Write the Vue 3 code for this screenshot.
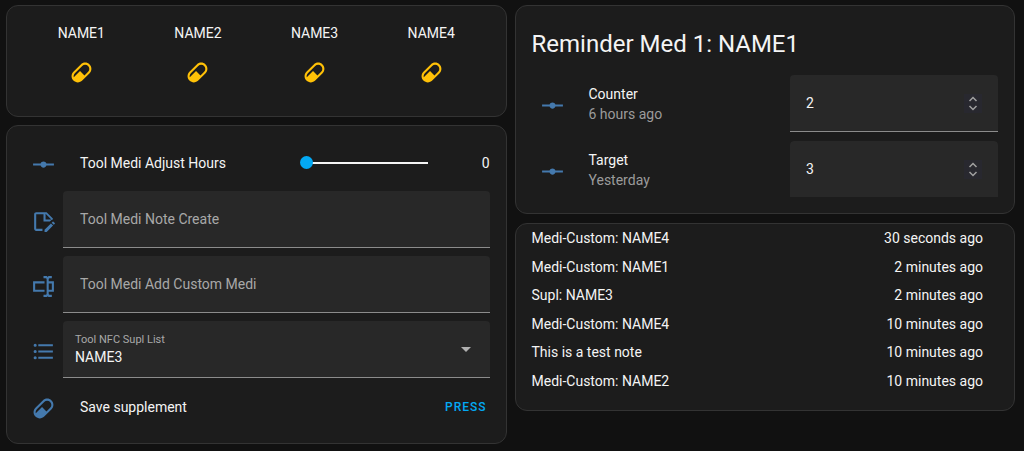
<script setup>
import { ref } from 'vue'

const icons = {
  pill: 'M4.22,11.29L11.29,4.22C13.64,1.88 17.43,1.88 19.78,4.22C22.12,6.56 22.12,10.36 19.78,12.71L12.71,19.78C10.36,22.12 6.56,22.12 4.22,19.78C1.88,17.43 1.88,13.64 4.22,11.29M5.64,12.71C4.59,13.75 4.24,15.24 4.6,16.57L10.59,10.59L14.83,14.83L18.36,11.29C19.93,9.73 19.93,7.2 18.36,5.64C16.8,4.07 14.27,4.07 12.71,5.64L5.64,12.71Z',
  vertex: 'M2,11H9.17C9.58,9.83 10.69,9 12,9C13.31,9 14.42,9.83 14.83,11H22V13H14.83C14.42,14.17 13.31,15 12,15C10.69,15 9.58,14.17 9.17,13H2V11Z',
  note: 'M18.13 12L19.39 10.74C19.83 10.3 20.39 10.06 21 10V9L15 3H5C3.89 3 3 3.89 3 5V19C3 20.1 3.89 21 5 21H11V19.13L11.13 19H5V5H12V12H18.13M14 4.5L19.5 10H14V4.5M19.13 13.83L21.17 15.87L15.04 22H13V19.96L19.13 13.83M22.85 14.19L21.87 15.17L19.83 13.13L20.81 12.15C21 11.95 21.33 11.95 21.53 12.15L22.85 13.47C23.05 13.67 23.05 14 22.85 14.19Z',
  textbox: 'M17,7H22V17H17V19A1,1 0 0,0 18,20H20V22H17.5C16.95,22 16,21.55 16,21C16,21.55 15.05,22 14.5,22H12V20H14A1,1 0 0,0 15,19V5A1,1 0 0,0 14,4H12V2H14.5C15.05,2 16,2.45 16,3C16,2.45 16.95,2 17.5,2H20V4H18A1,1 0 0,0 17,5V7M2,7H13V9H4V15H13V17H2V7M20,15V9H17V15H20Z',
  list: 'M7,5H21V7H7V5M7,13V11H21V13H7M4,4.5A1.5,1.5 0 0,1 5.5,6A1.5,1.5 0 0,1 4,7.5A1.5,1.5 0 0,1 2.5,6A1.5,1.5 0 0,1 4,4.5M4,10.5A1.5,1.5 0 0,1 5.5,12A1.5,1.5 0 0,1 4,13.5A1.5,1.5 0 0,1 2.5,12A1.5,1.5 0 0,1 4,10.5M7,19V17H21V19H7M4,16.5A1.5,1.5 0 0,1 5.5,18A1.5,1.5 0 0,1 4,19.5A1.5,1.5 0 0,1 2.5,18A1.5,1.5 0 0,1 4,16.5Z',
}

const names = ['NAME1', 'NAME2', 'NAME3', 'NAME4']
const hours = ref(0)
const supplement = ref('NAME3')
const textFields = [
  { id: 'note', label: 'Tool Medi Note Create', icon: icons.note },
  { id: 'custom', label: 'Tool Medi Add Custom Medi', icon: icons.textbox },
]
const counters = ref([
  { id: 'counter', label: 'Counter', changed: '6 hours ago', value: 2 },
  { id: 'target', label: 'Target', changed: 'Yesterday', value: 3 },
])
const log = [
  ['Medi-Custom: NAME4', '30 seconds ago'],
  ['Medi-Custom: NAME1', '2 minutes ago'],
  ['Supl: NAME3', '2 minutes ago'],
  ['Medi-Custom: NAME4', '10 minutes ago'],
  ['This is a test note', '10 minutes ago'],
  ['Medi-Custom: NAME2', '10 minutes ago'],
]
</script>

<template>
  <main class="board">
    <div class="column">
      <section class="card glance">
        <button v-for="name in names" :key="name" type="button" class="entity">
          <span>{{ name }}</span>
          <svg class="icon" viewBox="0 0 24 24" aria-hidden="true"><path :d="icons.pill" /></svg>
        </button>
      </section>

      <section class="card tools">
        <div class="row">
          <svg class="icon" viewBox="0 0 24 24" aria-hidden="true"><path :d="icons.vertex" /></svg>
          <label class="name" for="hours">Tool Medi Adjust Hours</label>
          <input id="hours" v-model="hours" class="slider" type="range" min="0" max="24" />
          <output class="hours" for="hours">{{ hours }}</output>
        </div>

        <div v-for="field in textFields" :key="field.id" class="row">
          <svg class="icon" viewBox="0 0 24 24" aria-hidden="true"><path :d="field.icon" /></svg>
          <input class="field text" type="text" :aria-label="field.label" :placeholder="field.label" />
        </div>

        <div class="row">
          <svg class="icon" viewBox="0 0 24 24" aria-hidden="true"><path :d="icons.list" /></svg>
          <div class="field select">
            <label for="supplement">Tool NFC Supl List</label>
            <select id="supplement" v-model="supplement">
              <option v-for="name in names" :key="name">{{ name }}</option>
            </select>
            <svg class="caret" viewBox="0 0 10 5" aria-hidden="true"><path d="M0 0H10L5 5Z" /></svg>
          </div>
        </div>

        <div class="row">
          <svg class="icon" viewBox="0 0 24 24" aria-hidden="true"><path :d="icons.pill" /></svg>
          <span class="name">Save supplement</span>
          <button type="button" class="press">PRESS</button>
        </div>
      </section>
    </div>

    <div class="column side">
      <section class="card reminder">
        <h1>Reminder Med 1: NAME1</h1>
        <div v-for="item in counters" :key="item.id" class="row">
          <svg class="icon" viewBox="0 0 24 24" aria-hidden="true"><path :d="icons.vertex" /></svg>
          <div class="info">
            <label :for="item.id">{{ item.label }}</label>
            <span class="changed">{{ item.changed }}</span>
          </div>
          <div class="field number" :class="{ flat: item.id === 'target' }">
            <input :id="item.id" v-model="item.value" type="number" />
            <svg class="stepper" viewBox="0 0 18 19" aria-hidden="true">
              <path d="M5.5 7L9 3.5L12.5 7M5.5 12L9 15.5L12.5 12" />
            </svg>
          </div>
        </div>
      </section>

      <section class="card log">
        <table>
          <tbody>
            <tr v-for="(entry, i) in log" :key="i">
              <td>{{ entry[0] }}</td>
              <td class="when">{{ entry[1] }}</td>
            </tr>
          </tbody>
        </table>
      </section>
    </div>
  </main>
</template>

<style>
body {
  margin: 0;
  background: #111;
}
</style>

<style scoped>
.board {
  display: grid;
  grid-template-columns: repeat(2, minmax(0, 1fr));
  gap: 8px;
  align-items: start;
  padding: 5px 9px 7px 6px;
  color: #f4f4f4;
  font: 14px/20px Roboto, "Liberation Sans", sans-serif;
}
.column {
  display: grid;
  gap: 8px;
}
.side {
  gap: 9px;
}
.card {
  box-sizing: border-box;
  background: #1c1c1c;
  border: 1px solid #333;
  border-radius: 12px;
}
button,
input,
select {
  margin: 0;
  padding: 0;
  border: 0;
  outline: 0;
  background: none;
  color: inherit;
  font: inherit;
}
.icon {
  flex: none;
  width: 25px;
  height: 25px;
  fill: #4479ad;
}

.glance {
  display: grid;
  grid-template-columns: repeat(4, 1fr);
  padding: 17px 16px 31px;
}
.entity {
  display: flex;
  flex-direction: column;
  align-items: center;
  gap: 17px;
}
.entity .icon {
  fill: #ffc107;
}

.tools {
  display: grid;
  gap: 8px;
  padding: 16px 16px 16px 24px;
}
.row {
  display: flex;
  align-items: center;
  gap: 7px;
  min-height: 41px;
}
.row > .icon {
  margin-top: 3px;
}
.name {
  flex: 1;
  padding-left: 17px;
}
.slider {
  appearance: none;
  width: 128px;
  height: 20px;
}
.slider::-webkit-slider-runnable-track {
  height: 2px;
  background: linear-gradient(90deg, transparent 6px, #f5f5f5 6px);
}
.slider::-webkit-slider-thumb {
  appearance: none;
  width: 13px;
  height: 13px;
  margin-top: -6px;
  border-radius: 50%;
  background: #03a9f4;
}
.hours {
  width: 55px;
  text-align: right;
}
.field {
  box-sizing: border-box;
  height: 57px;
  background: #282828;
  border-bottom: 1px solid #8c8c8c;
  border-radius: 4px 4px 0 0;
}
.text {
  flex: 1;
  min-width: 0;
  padding: 0 17px;
}
.text::placeholder {
  color: #a8a8a8;
  opacity: 1;
}
.select {
  position: relative;
  flex: 1;
  padding: 12px 12px 0;
}
.select label {
  display: block;
  color: #a8a8a8;
  font-size: 11px;
  line-height: 14px;
}
.select select {
  display: block;
  width: 100%;
  appearance: none;
}
.caret {
  position: absolute;
  top: 26px;
  right: 19px;
  width: 10px;
  height: 5px;
  fill: #b0b0b0;
  pointer-events: none;
}
.press {
  padding: 8px 3px;
  color: #03a9f4;
  font-size: 12px;
  font-weight: 500;
  letter-spacing: 1px;
}

.reminder {
  display: grid;
  gap: 9px;
  padding: 22px 16px 15px 24px;
}
.reminder h1 {
  margin: 0 0 6px -8px;
  font-size: 24px;
  font-weight: 400;
  line-height: 32px;
}
.info {
  display: flex;
  flex: 1;
  flex-direction: column;
  padding-left: 17px;
}
.changed {
  color: #9b9b9b;
}
.number {
  display: flex;
  align-items: center;
  width: 208px;
  padding: 0 16px;
}
.number.flat {
  border-bottom-color: transparent;
  background-clip: padding-box;
}
.number input {
  flex: 1;
  min-width: 0;
  appearance: textfield;
}
.number input::-webkit-inner-spin-button {
  appearance: none;
}
.stepper {
  width: 18px;
  height: 19px;
  background: #28282f;
  fill: none;
  stroke: #a0a0a0;
  stroke-width: 1.5;
}

.log {
  padding: 0 31px 15px 16px;
}
.log table {
  width: 100%;
  height: 171px;
  border-collapse: collapse;
}
.log td {
  padding: 0;
}
.log .when {
  text-align: right;
}
</style>
